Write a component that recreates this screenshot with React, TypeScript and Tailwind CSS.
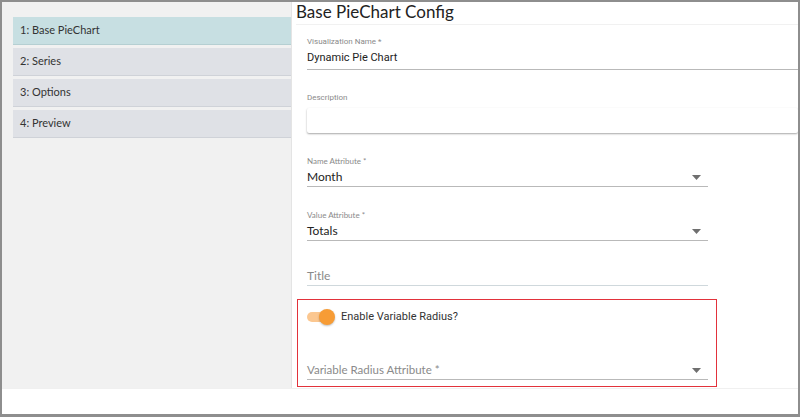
import React from "react";

const steps = ["1: Base PieChart", "2: Series", "3: Options", "4: Preview"];

const Caret: React.FC = () => (
  <svg width="9" height="5" viewBox="0 0 9 5" className="mr-[7px]">
    <path d="M0 0h9L4.5 5z" fill="#6f6f6f" />
  </svg>
);

const SelectField: React.FC<{ label?: string; value?: string; placeholder?: string; className?: string }> = ({
  label,
  value,
  placeholder,
  className = "",
}) => (
  <div className={`w-[401px] ${className}`}>
    {label && (
      <div className="h-[14px] text-[8px] leading-[14px] text-[#8a8a8a] font-['Lato',sans-serif]">{label}</div>
    )}
    <div className="flex h-[19px] items-center justify-between border-b border-[#b9b9b9]">
      <span
        className={`leading-[18px] font-['Lato',sans-serif] ${
          value ? "text-[12px] text-[#222]" : "text-[11.5px] text-[#8a8a8a]"
        }`}
      >
        {value ?? placeholder}
      </span>
      <Caret />
    </div>
  </div>
);

export default function App() {
  return (
    <div className="flex h-[417px] w-[800px] flex-col overflow-hidden border-x-2 border-t-2 border-b-[3px] border-[#8e8e8e] bg-white">
      <div className="flex h-[386px]">
        <aside className="flex w-[289px] shrink-0 flex-col gap-[3px] bg-[#f1f1f1] pl-[11px] pt-[15px]">
          {steps.map((s, i) => (
            <div
              key={s}
              className={`flex h-[28px] items-center border-b pl-[7px] text-[11px] text-[#333] font-['Lato',sans-serif] ${
                i === 0 ? "bg-[#c7dfe2] border-[#b5cfd2]" : "bg-[#dfe1e6] border-[#cfd2d8]"
              }`}
            >
              {s}
            </div>
          ))}
        </aside>

        <main className="flex flex-1 flex-col border-l border-[#e4e4e4] pl-[4px]">
          <h1 className="h-[23px] border-b border-[#f1f1f1] text-[17px] leading-[20px] text-[#222] font-['Lato',sans-serif]">
            Base PieChart Config
          </h1>

          <div className="flex flex-col pl-[11px]">
            <div className="mt-[10px]">
              <div className="h-[14px] text-[8px] leading-[14px] text-[#8a8a8a] font-['Roboto',sans-serif]">
                Visualization Name *
              </div>
              <div className="h-[21px] border-b border-[#b9b9b9] text-[11px] leading-[18px] text-[#222] font-['Roboto',sans-serif]">
                Dynamic Pie Chart
              </div>
            </div>

            <div className="mt-[21px]">
              <div className="h-[14px] text-[8px] leading-[14px] text-[#8a8a8a] font-['Roboto',sans-serif]">
                Description
              </div>
              <div className="mt-[3px] h-[25px] rounded-[2px] bg-white shadow-[0_1px_2px_rgba(0,0,0,0.35)]" />
            </div>

            <SelectField label="Name Attribute *" value="Month" className="mt-[21px]" />
            <SelectField label="Value Attribute *" value="Totals" className="mt-[21px]" />

            <div className="mt-[25px] h-[20px] w-[401px] border-b border-[#cfd8dc] text-[12px] leading-[19px] text-[#8a8a8a] font-['Lato',sans-serif]">
              Title
            </div>

            <div className="-ml-[10px] mt-[13px] w-[420px] border border-[#e2323b] pb-[6px] pl-[9px] pt-[7px]">
              <div className="flex h-[20px] items-center">
                <div className="relative h-[10px] w-[24px] rounded-full bg-[#fbc790]">
                  <div className="absolute -top-[3px] left-[12px] h-[16px] w-[16px] rounded-full bg-[#f79c35] shadow-[0_1px_2px_rgba(0,0,0,0.25)]" />
                </div>
                <span className="ml-[10px] text-[11px] text-[#333] font-['Roboto',sans-serif]">
                  Enable Variable Radius?
                </span>
              </div>
              <SelectField placeholder="Variable Radius Attribute *" className="mt-[34px]" />
            </div>
          </div>
        </main>
      </div>
      <div className="flex-1 border-t border-[#f0f0f0] bg-white" />
    </div>
  );
}
